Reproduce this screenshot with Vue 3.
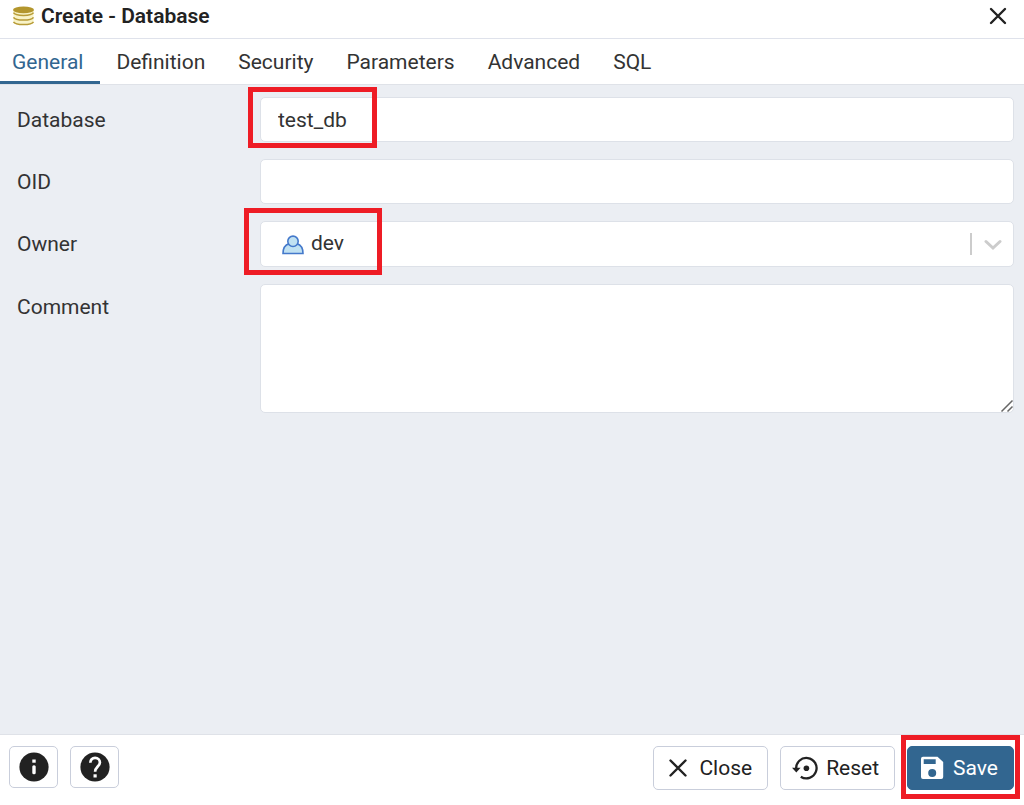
<script setup>
import { ref } from 'vue'

const tabs = ['General', 'Definition', 'Security', 'Parameters', 'Advanced', 'SQL']
const active = ref('General')
const database = ref('test_db')
const oid = ref('')
const owner = ref('dev')
const comment = ref('')
</script>

<template>
  <main class="dialog">
    <header class="titlebar">
      <svg class="db-icon" viewBox="0 0 22 20" aria-hidden="true">
        <path d="M1 4v12c0 1.700 4.500 3 10 3s10-1.300 10-3V4z" fill="#f8f3c8" />
        <path d="M1 6.700c1 1.900 5 2.700 10 2.700s9-.8 10-2.700M1 11.300c1 1.900 5 2.700 10 2.700s9-.8 10-2.700M1 15.900c1 1.900 5 2.700 10 2.700s9-.8 10-2.700" fill="none" stroke="#b79b37" stroke-width="1.500" />
        <ellipse cx="11" cy="3.900" rx="10.500" ry="3.400" fill="#b3962d" />
      </svg>
      <h1>Create - Database</h1>
      <button class="dismiss" type="button" aria-label="Close dialog">
        <svg viewBox="0 0 18 18" aria-hidden="true"><path d="M2 2l14 14M16 2L2 16" /></svg>
      </button>
    </header>

    <nav class="tabs" role="tablist">
      <button
        v-for="tab in tabs"
        :key="tab"
        type="button"
        role="tab"
        :aria-selected="active === tab"
        :class="{ active: active === tab }"
        @click="active = tab"
      >{{ tab }}</button>
    </nav>

    <form id="database-form" class="form" @submit.prevent>
      <label for="database">Database</label>
      <div class="field">
        <input id="database" v-model="database" type="text" />
        <span class="mark mark-database"></span>
      </div>

      <label for="oid">OID</label>
      <div class="field">
        <input id="oid" v-model="oid" type="text" />
      </div>

      <label for="owner">Owner</label>
      <div class="field">
        <select id="owner" v-model="owner">
          <option value="dev">dev</option>
        </select>
        <svg class="user-icon" viewBox="0 0 22 20" aria-hidden="true">
          <path d="M1 18.500c0-5 2.500-8.700 6-9.700h8c3.500 1 6 4.700 6 9.700z" />
          <circle cx="11" cy="6.300" r="5.200" />
        </svg>
        <span class="divider"></span>
        <svg class="chevron" viewBox="0 0 18 12" aria-hidden="true"><path d="M2 2.500l7 6.500 7-6.500" /></svg>
        <span class="mark mark-owner"></span>
      </div>

      <label for="comment">Comment</label>
      <div class="field">
        <textarea id="comment" v-model="comment"></textarea>
        <svg class="grip" viewBox="0 0 14 14" aria-hidden="true"><path d="M1.500 12.500l11-11M7.500 12.500l5-5" /></svg>
      </div>
    </form>

    <footer class="footer">
      <button class="icon-button" type="button" aria-label="Information">
        <svg viewBox="0 0 30 30" aria-hidden="true">
          <circle cx="15" cy="15" r="14.600" fill="#222" />
          <rect x="13.300" y="7.500" width="3.400" height="3.200" fill="#fff" />
          <rect x="13.300" y="13.200" width="3.400" height="9" rx="1.500" fill="#fff" />
        </svg>
      </button>
      <button class="icon-button" type="button" aria-label="Help">
        <svg viewBox="0 0 30 30" aria-hidden="true">
          <circle cx="15" cy="15" r="14.600" fill="#222" />
          <path d="M10.300 10.800c0-2.900 2-4.900 4.800-4.900s4.800 1.900 4.800 4.500c0 3.700-4.800 4.600-4.800 9.300" fill="none" stroke="#fff" stroke-width="2.700" />
          <rect x="13.500" y="22.300" width="3.200" height="3.200" fill="#fff" />
        </svg>
      </button>

      <div class="actions">
        <button class="button" type="button">
          <svg class="cross" viewBox="-4 -4 26 26" aria-hidden="true"><path d="M1.500 1.500l15 15M16.500 1.500l-15 15" /></svg>
          Close
        </button>
        <button class="button" type="button">
          <svg viewBox="0 0 26 26" aria-hidden="true">
            <path d="M4.200 14A10.200 10.200 0 1 1 8.800 21.700" fill="none" stroke="#222" stroke-width="2.300" />
            <path d="M0 12.800h8.600l-4.300 4.800z" fill="#222" />
            <circle cx="14.400" cy="13.200" r="2.800" fill="#222" />
          </svg>
          Reset
        </button>
        <div class="field">
          <button class="button primary" type="submit" form="database-form">
            <svg viewBox="-1 -1 26 26" aria-hidden="true">
              <path fill="#fff" fill-rule="evenodd" d="M3 .8h14.500L23.200 6v15a2 2 0 0 1-2 2H3a2 2 0 0 1-2-2V2.800a2 2 0 0 1 2-2zM3.700 3.200v4.800h12V3.200zM12.200 13a4 4 0 1 0 0 8 4 4 0 0 0 0-8z" />
            </svg>
            Save
          </button>
          <span class="mark mark-save"></span>
        </div>
      </div>
    </footer>
  </main>
</template>

<style>
body {
  margin: 0;
}
</style>

<style scoped>
.dialog {
  display: flex;
  flex-direction: column;
  min-height: 100vh;
  background: #fff;
  color: #333;
  font-family: Roboto, sans-serif;
  font-size: 21px;
}

.dialog * {
  box-sizing: border-box;
}

button,
input,
select,
textarea {
  margin: 0;
  font: inherit;
  color: inherit;
}

button {
  cursor: pointer;
}

svg {
  display: block;
  flex: none;
}

.titlebar {
  display: flex;
  align-items: center;
  height: 39px;
  padding: 0 17px 6px 12px;
  border-bottom: 1px solid #dfe2eb;
}

.db-icon {
  width: 23px;
  height: 20px;
}

h1 {
  margin: 0 auto 0 6px;
  color: #222;
  font-size: 21px;
  font-weight: 600;
  line-height: 24px;
}

.dismiss {
  padding: 0;
  border: 0;
  background: none;
}

.dismiss svg {
  width: 18px;
  height: 18px;
}

.dismiss svg,
.cross {
  fill: none;
  stroke: #222;
  stroke-width: 2.4;
  stroke-linecap: round;
}

.tabs {
  display: flex;
  height: 46px;
  border-bottom: 1px solid #dfe2e8;
}

.tabs button {
  padding: 3px 17px 0 16px;
  border: 0;
  border-bottom: 3px solid transparent;
  background: none;
}

.tabs button:first-child {
  padding-left: 12px;
}

.tabs .active {
  border-color: #326690;
  color: #326690;
}

.form {
  display: grid;
  grid-template-columns: 243px 1fr;
  align-content: start;
  gap: 17px 0;
  flex: 1;
  padding: 12px 10px 17px 17px;
  background: #ebeef3;
}

.form label {
  height: 45px;
  line-height: 46px;
}

.field {
  position: relative;
}

.field input,
.field select,
.field textarea {
  display: block;
  width: 100%;
  height: 45px;
  padding: 0 17px;
  border: 1px solid #dde1e8;
  border-radius: 5px;
  outline: 0;
  background: #fff;
}

.field select {
  height: 46px;
  padding: 0 60px 2px 50px;
  appearance: none;
}

.field textarea {
  height: 129px;
  padding: 10px 17px;
  resize: none;
}

.user-icon {
  position: absolute;
  top: 14px;
  left: 22px;
  width: 22px;
  height: 20px;
  fill: #c0e1f2;
  stroke: #4479cb;
  stroke-width: 1.6;
  pointer-events: none;
}

.divider {
  position: absolute;
  top: 12px;
  right: 42px;
  width: 2px;
  height: 22px;
  background: #ccc;
}

.chevron {
  position: absolute;
  top: 18px;
  right: 12px;
  width: 18px;
  height: 12px;
  fill: none;
  stroke: #ccc;
  stroke-width: 3;
  stroke-linecap: round;
  pointer-events: none;
}

.grip {
  position: absolute;
  right: 0;
  bottom: 0;
  width: 14px;
  height: 14px;
  fill: none;
  stroke: #666;
  stroke-width: 1.5;
  pointer-events: none;
}

.mark {
  position: absolute;
  border: 5px solid #ee1c25;
  pointer-events: none;
}

.mark-database {
  top: -10px;
  left: -12px;
  width: 129px;
  height: 61px;
}

.mark-owner {
  top: -13px;
  left: -16px;
  width: 138px;
  height: 67px;
}

.mark-save {
  inset: -11px -6px -9px;
}

.footer {
  display: flex;
  align-items: flex-start;
  gap: 12px;
  padding: 11px 10px 15px 9px;
  border-top: 1px solid #dfe2e8;
}

.icon-button,
.button {
  display: flex;
  align-items: center;
  justify-content: center;
  border: 1px solid #c9cedb;
  border-radius: 5px;
  background: #fff;
}

.icon-button {
  width: 49px;
  height: 42px;
  padding: 0;
}

.icon-button svg {
  width: 30px;
  height: 30px;
}

.actions {
  display: flex;
  gap: 12px;
  margin-left: auto;
}

.button {
  gap: 8px;
  height: 44px;
  padding: 0 15px 0 11px;
  color: #222;
}

.button svg {
  width: 26px;
  height: 26px;
}

.primary {
  border-color: #326690;
  background: #326690;
  color: #fff;
}
</style>
